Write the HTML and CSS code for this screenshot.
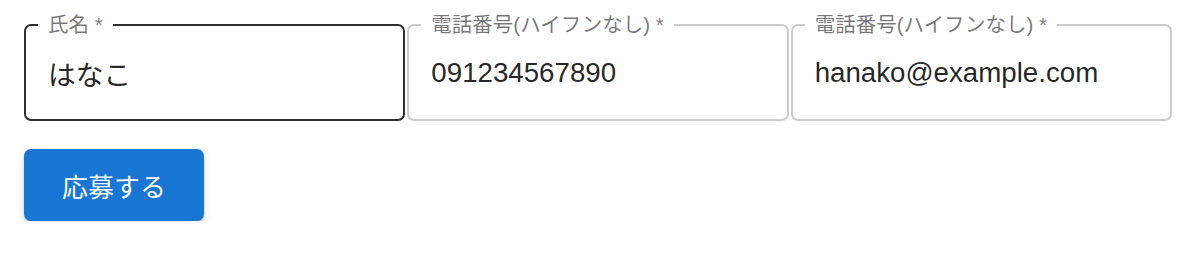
FILE: index.html
```html
<!DOCTYPE html>
<html lang="ja">
<head>
<meta charset="utf-8">
<title>応募フォーム</title>
<link rel="stylesheet" href="styles.css">
</head>
<body>
<form class="form">
  <div class="fields">
    <fieldset class="field field--hover">
      <legend class="field__label">氏名 *</legend>
      <input class="field__input" type="text" value="はなこ">
    </fieldset>
    <fieldset class="field">
      <legend class="field__label">電話番号(ハイフンなし) *</legend>
      <input class="field__input" type="text" value="091234567890">
    </fieldset>
    <fieldset class="field">
      <legend class="field__label">電話番号(ハイフンなし) *</legend>
      <input class="field__input" type="text" value="hanako@example.com">
    </fieldset>
  </div>
  <button class="submit" type="button">応募する</button>
</form>
</body>
</html>
```

FILE: styles.css
```css
html, body {
  margin: 0;
  background: #ffffff;
}

body {
  font-family: "Liberation Sans", "Noto Sans CJK JP", sans-serif;
}

.form {
  padding: 13px 0 0 24px;
  display: flex;
  flex-direction: column;
  align-items: flex-start;
}

.fields {
  display: grid;
  grid-template-columns: repeat(3, 1fr);
  gap: 2px;
  width: 1148px;
}

.field {
  margin: 0;
  min-width: 0;
  padding: 0 0 10px 12px;
  border: 2px solid rgba(0, 0, 0, 0.2);
  border-radius: 7px;
}

.field--hover {
  border-color: rgba(0, 0, 0, 0.82);
}

.field__label {
  padding: 0 10px;
  font-family: "Liberation Sans", "Noto Sans CJK JP", sans-serif;
  font-size: 20.5px;
  line-height: 24px;
  color: rgba(0, 0, 0, 0.55);
}

.field__input {
  display: block;
  box-sizing: border-box;
  width: 100%;
  height: 72px;
  margin: 0;
  padding: 0 10px;
  border: 0;
  outline: none;
  background: transparent;
  font-family: "Liberation Sans", "Noto Sans CJK JP", sans-serif;
  font-size: 27.7px;
  color: rgba(0, 0, 0, 0.87);
}

.submit {
  margin-top: 28px;
  height: 72px;
  padding: 0 38px;
  border: 0;
  border-radius: 7px;
  background: #1976d2;
  color: #ffffff;
  font-family: "Noto Sans CJK JP", sans-serif;
  font-size: 26px;
  box-shadow: 0 5px 2px -3px rgba(0, 0, 0, 0.2), 0 3px 3px 0 rgba(0, 0, 0, 0.14), 0 2px 8px 0 rgba(0, 0, 0, 0.12);
}
```
